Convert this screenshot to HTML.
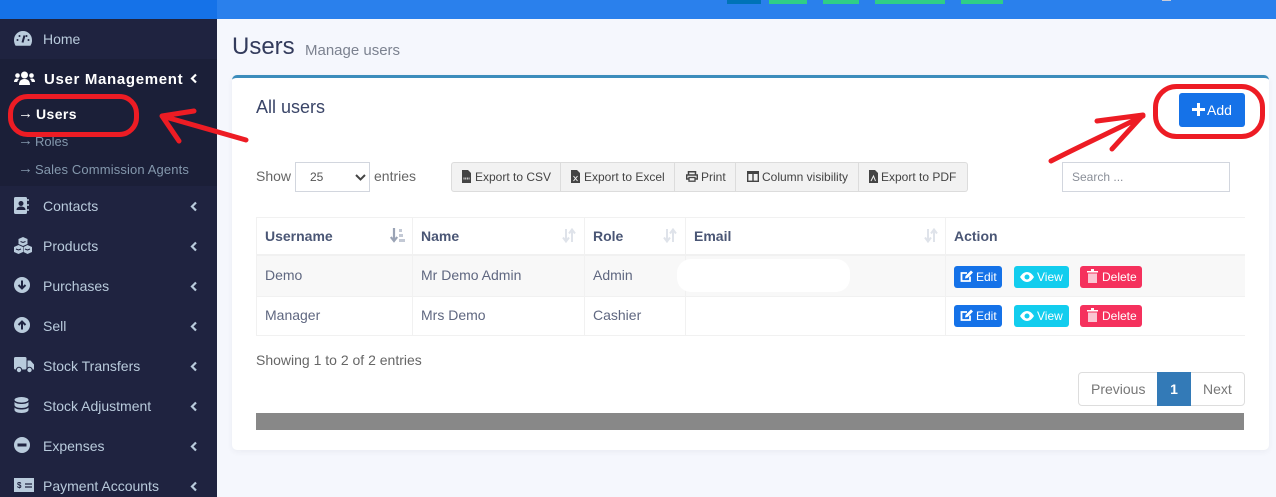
<!DOCTYPE html>
<html><head><meta charset="utf-8"><style>
html,body{margin:0;padding:0}
body{width:1276px;height:497px;overflow:hidden;position:relative;background:#f5f7fd;font-family:"Liberation Sans",sans-serif;font-size:14px;color:#555}
.a{position:absolute;white-space:nowrap}
.nav{left:43px;color:#b9cbdc;font-size:14px;line-height:20px}
.chev{left:190px}
.ic{position:absolute;left:14px}
.th{top:226px;font-weight:bold;color:#4a5675;font-size:14px;line-height:20px}
.td{color:#5f6780;font-size:14px;line-height:20px}
.b{position:absolute;height:22px;border-radius:3px;color:#fff;font-size:12px;line-height:22px;text-align:left;box-sizing:border-box;white-space:nowrap}
.tb{position:absolute;top:162px;height:30px;box-sizing:border-box;background:#f2f2f2;border:1px solid #dcdcdc;border-left-width:0;color:#444;font-size:12px;line-height:28px;white-space:nowrap}
.sort{position:absolute;top:228px}
.line{position:absolute;background:#f1f1f1}
</style></head><body>
<div class="a" style="left:0;top:0;width:217px;height:19px;background:#1572e8"></div>
<div class="a" style="left:217px;top:0;width:1059px;height:19px;background:#2a80ec"></div>
<div class="a" style="left:727px;top:0;width:34px;height:4px;background:#0073b7"></div>
<div class="a" style="left:769px;top:0;width:38px;height:4px;background:#2fce87"></div>
<div class="a" style="left:823px;top:0;width:36px;height:4px;background:#2fce87"></div>
<div class="a" style="left:875px;top:0;width:70px;height:4px;background:#2fce87"></div>
<div class="a" style="left:961px;top:0;width:42px;height:4px;background:#2fce87"></div>
<div class="a" style="left:1162px;top:0;width:9px;height:1px;background:#c8ccd8"></div>

<div class="a" style="left:0;top:19px;width:217px;height:478px;background:#1f2340"></div>
<div class="a" style="left:0;top:59px;width:217px;height:127px;background:#1b1f38"></div>

<svg class="ic" style="top:31px" width="18" height="15" viewBox="0 0 18 15"><path d="M9 0a9 9 0 0 0-9 9c0 2.200.6 4.200 1.600 5.800h14.800A9 9 0 0 0 18 9a9 9 0 0 0-9-9z" fill="#b9cbdc"/><path d="M8.500 11.500l2-7" stroke="#1f2340" stroke-width="2"/><circle cx="3.500" cy="9" r="1" fill="#1f2340"/><circle cx="14.500" cy="9" r="1" fill="#1f2340"/><circle cx="5.500" cy="5" r="1" fill="#1f2340"/><circle cx="12.500" cy="5" r="1" fill="#1f2340"/></svg>
<div class="a nav" style="top:29px">Home</div>

<svg class="ic" style="top:71px" width="21" height="15" viewBox="0 0 21 15" fill="#fff"><circle cx="10.500" cy="4" r="3.500"/><circle cx="3.500" cy="4.500" r="2.300"/><circle cx="17.500" cy="4.500" r="2.300"/><path d="M5 14c0-4 2-6 5.500-6s5.500 2 5.500 6zM0 11c0-2 1-3.500 3-3.500 1 0 2 .5 2 .5-1 1-1.600 2-1.800 3zM21 11c0-2-1-3.500-3-3.500-1 0-2 .5-2 .5 1 1 1.600 2 1.800 3z"/></svg>
<div class="a" style="left:44px;top:70px;color:#fff;font-size:15px;line-height:20px;font-weight:bold;letter-spacing:.67px">User Management</div>
<svg class="a chev" style="top:73px" width="8" height="11" viewBox="0 0 8 11"><path d="M6 1.500L2 5.500l4 4" fill="none" stroke="#fff" stroke-width="2.200"/></svg>

<div class="a" style="left:18px;top:105px;width:14px;height:18px;color:#fff;font-size:15px;line-height:18px">→</div>
<div class="a" style="left:36px;top:105px;color:#fff;font-size:14px;line-height:18px;font-weight:bold;letter-spacing:.4px">Users</div>
<div class="a" style="left:18px;top:132px;color:#8498ad;font-size:15px;line-height:18px">→</div>
<div class="a" style="left:35px;top:133px;color:#8498ad;font-size:13px;line-height:18px">Roles</div>
<div class="a" style="left:18px;top:160px;color:#8498ad;font-size:15px;line-height:18px">→</div>
<div class="a" style="left:35px;top:161px;color:#8498ad;font-size:13px;line-height:18px;letter-spacing:.13px">Sales Commission Agents</div>

<svg class="ic" style="top:197px" width="15" height="17" viewBox="0 0 15 17"><rect x="0" y="0" width="13" height="17" rx="1.500" fill="#b9cbdc"/><circle cx="7" cy="6.500" r="2.500" fill="#1f2340"/><path d="M2.500 13c0-2.500 2-3.500 4.500-3.500s4.500 1 4.500 3.500z" fill="#1f2340"/><path d="M13 3h2M13 8h2M13 13h2" stroke="#b9cbdc" stroke-width="1.500"/></svg>
<div class="a nav" style="top:196px">Contacts</div>

<svg class="ic" style="top:237px" width="18" height="17" viewBox="0 0 18 17" fill="#b9cbdc"><path d="M9 0l4.500 2v5L9 9 4.500 7V2z"/><path d="M4.500 8L9 10v5l-4.500 2L0 15v-5z"/><path d="M13.500 8l4.500 2v5l-4.500 2L9.500 15v-5z"/><path d="M6.500 4.500L9 5.500l2.500-1M2 12l2.500 1 2.500-1M11 12l2.500 1 2.500-1" fill="none" stroke="#1f2340"/></svg>
<div class="a nav" style="top:236px">Products</div>

<svg class="ic" style="top:277px" width="16" height="16" viewBox="0 0 16 16"><circle cx="8" cy="8" r="8" fill="#b9cbdc"/><path d="M8 3.500v8M4.500 8L8 11.500 11.500 8" fill="none" stroke="#1f2340" stroke-width="2"/></svg>
<div class="a nav" style="top:276px">Purchases</div>

<svg class="ic" style="top:317px" width="16" height="16" viewBox="0 0 16 16"><circle cx="8" cy="8" r="8" fill="#b9cbdc"/><path d="M8 12.500v-8M4.500 8L8 4.500 11.500 8" fill="none" stroke="#1f2340" stroke-width="2"/></svg>
<div class="a nav" style="top:316px">Sell</div>

<svg class="ic" style="top:357px" width="20" height="16" viewBox="0 0 20 16" fill="#b9cbdc"><rect x="0" y="0" width="12.500" height="12.500" rx="1.500"/><path d="M13.500 3.500h3l3.500 4v5h-6.500z"/><circle cx="5" cy="13" r="2.700" stroke="#1f2340"/><circle cx="15.500" cy="13" r="2.700" stroke="#1f2340"/></svg>
<div class="a nav" style="top:356px">Stock Transfers</div>

<svg class="ic" style="top:397px" width="15" height="16" viewBox="0 0 15 16" fill="#b9cbdc"><ellipse cx="7.500" cy="2.800" rx="7" ry="2.800"/><path d="M.5 5c1.500 1.500 4 2 7 2s5.500-.5 7-2v3c0 1.500-3 3-7 3s-7-1.500-7-3z"/><path d="M.5 10.500c1.500 1.500 4 2 7 2s5.500-.5 7-2V13c0 1.500-3 3-7 3s-7-1.500-7-3z"/></svg>
<div class="a nav" style="top:396px">Stock Adjustment</div>

<svg class="ic" style="top:437px" width="16" height="16" viewBox="0 0 16 16"><circle cx="8" cy="8" r="8" fill="#b9cbdc"/><rect x="3.500" y="6.500" width="9" height="3" fill="#1f2340"/></svg>
<div class="a nav" style="top:436px">Expenses</div>

<svg class="ic" style="top:478px" width="20" height="14" viewBox="0 0 20 14"><rect width="20" height="14" fill="#b9cbdc"/><path d="M11 6h7M11 9h7" stroke="#1f2340" stroke-width="1.300"/><text x="3" y="10" font-size="8" font-family="Liberation Sans" font-weight="bold" fill="#1f2340">$</text></svg>
<div class="a nav" style="top:476px">Payment Accounts</div>

<svg width="8" height="11" viewBox="0 0 8 11" class="a chev" style="top:201px"><path d="M6 1.500L2 5.500l4 4" fill="none" stroke="#b9cbdc" stroke-width="2.200"/></svg>
<svg width="8" height="11" viewBox="0 0 8 11" class="a chev" style="top:241px"><path d="M6 1.500L2 5.500l4 4" fill="none" stroke="#b9cbdc" stroke-width="2.200"/></svg>
<svg width="8" height="11" viewBox="0 0 8 11" class="a chev" style="top:281px"><path d="M6 1.500L2 5.500l4 4" fill="none" stroke="#b9cbdc" stroke-width="2.200"/></svg>
<svg width="8" height="11" viewBox="0 0 8 11" class="a chev" style="top:321px"><path d="M6 1.500L2 5.500l4 4" fill="none" stroke="#b9cbdc" stroke-width="2.200"/></svg>
<svg width="8" height="11" viewBox="0 0 8 11" class="a chev" style="top:361px"><path d="M6 1.500L2 5.500l4 4" fill="none" stroke="#b9cbdc" stroke-width="2.200"/></svg>
<svg width="8" height="11" viewBox="0 0 8 11" class="a chev" style="top:401px"><path d="M6 1.500L2 5.500l4 4" fill="none" stroke="#b9cbdc" stroke-width="2.200"/></svg>
<svg width="8" height="11" viewBox="0 0 8 11" class="a chev" style="top:441px"><path d="M6 1.500L2 5.500l4 4" fill="none" stroke="#b9cbdc" stroke-width="2.200"/></svg>
<svg width="8" height="11" viewBox="0 0 8 11" class="a chev" style="top:481px"><path d="M6 1.500L2 5.500l4 4" fill="none" stroke="#b9cbdc" stroke-width="2.200"/></svg>

<div class="a" style="left:232px;top:32px;font-size:24px;line-height:30px;color:#333b5c">Users</div>
<div class="a" style="left:305px;top:42px;font-size:15px;line-height:18px;color:#7c8290">Manage users</div>

<div class="a" style="left:232px;top:75px;width:1037px;height:375px;background:#fff;border-radius:5px;border-top:3px solid #3c8dbc;box-sizing:border-box;box-shadow:0 2px 6px rgba(69,65,78,.06)"></div>
<div class="a" style="left:256px;top:96px;font-size:18px;line-height:22px;color:#3a4568">All users</div>

<div class="a" style="left:1179px;top:93px;width:66px;height:34px;background:#1572e8;border-radius:3px"></div>
<svg class="a" style="left:1192px;top:103px" width="13" height="13" viewBox="0 0 13 13"><path d="M6.500 0v13M0 6.500h13" stroke="#fff" stroke-width="3"/></svg>
<div class="a" style="left:1207px;top:100px;color:#fff;font-size:14px;line-height:20px">Add</div>

<div class="a td" style="left:256px;top:166px;color:#666">Show</div>
<div class="a" style="left:295px;top:162px;width:75px;height:30px;box-sizing:border-box;border:1px solid #d2d6de;background:#fff;font-size:12px;line-height:28px;padding-left:14px;color:#555">25</div>
<svg class="a" style="left:355px;top:174px" width="11" height="7" viewBox="0 0 11 7"><path d="M1 1l4.500 4.500L10 1" fill="none" stroke="#444" stroke-width="2"/></svg>
<div class="a td" style="left:374px;top:166px;color:#666">entries</div>

<div class="tb" style="left:451px;width:110px;border-left-width:1px;border-radius:3px 0 0 3px;padding-left:23px">Export to CSV</div>
<div class="tb" style="left:561px;width:114px;padding-left:23px">Export to Excel</div>
<div class="tb" style="left:675px;width:61px;padding-left:26px">Print</div>
<div class="tb" style="left:736px;width:123px;padding-left:26px">Column visibility</div>
<div class="tb" style="left:859px;width:109px;border-radius:0 3px 3px 0;padding-left:22px">Export to PDF</div>
<svg class="a" style="left:462px;top:170px" width="9" height="13" viewBox="0 0 9 13"><path d="M0 0h6l3 3v10H0z" fill="#444"/><path d="M1.500 8.500h6" stroke="#ddd" stroke-width="2" stroke-dasharray="1 .7"/></svg>
<svg class="a" style="left:571px;top:170px" width="9" height="13" viewBox="0 0 9 13"><path d="M0 0h6l3 3v10H0z" fill="#444"/><path d="M2.500 6l4 5M6.500 6l-4 5" stroke="#f2f2f2"/></svg>
<svg class="a" style="left:686px;top:171px" width="12" height="11" viewBox="0 0 12 11"><path d="M2.500 4V.8h7V4M2.500 8H.7V4h10.600v4H9.500" fill="none" stroke="#444" stroke-width="1.500"/><rect x="3" y="6.500" width="6" height="3.700" fill="none" stroke="#444" stroke-width="1.300"/></svg>
<svg class="a" style="left:747px;top:171px" width="12" height="11" viewBox="0 0 12 11"><rect x=".7" y=".7" width="10.600" height="9.600" fill="none" stroke="#444" stroke-width="1.400"/><rect x="0" y="0" width="12" height="3" fill="#444"/><path d="M6 1v9" stroke="#444" stroke-width="1.400"/></svg>
<svg class="a" style="left:869px;top:170px" width="9" height="13" viewBox="0 0 9 13"><path d="M0 0h6l3 3v10H0z" fill="#444"/><path d="M2 11l2.500-5 2 5" fill="none" stroke="#f2f2f2"/></svg>

<div class="a" style="left:1062px;top:162px;width:168px;height:30px;box-sizing:border-box;border:1px solid #d2d6de;background:#fff;font-size:12px;line-height:28px;padding-left:9px;color:#8a8f98">Search ...</div>

<div class="a" style="left:256px;top:254px;width:989px;height:43px;background:#f8f8f8"></div>
<div class="line" style="left:256px;top:217px;width:989px;height:1px"></div>
<div class="line" style="left:256px;top:254px;width:989px;height:2px"></div>
<div class="line" style="left:256px;top:296px;width:989px;height:1px"></div>
<div class="line" style="left:256px;top:335px;width:989px;height:1px"></div>
<div class="line" style="left:256px;top:217px;width:1px;height:119px"></div>
<div class="line" style="left:412px;top:217px;width:1px;height:119px"></div>
<div class="line" style="left:584px;top:217px;width:1px;height:119px"></div>
<div class="line" style="left:685px;top:217px;width:1px;height:119px"></div>
<div class="line" style="left:945px;top:217px;width:1px;height:119px"></div>

<div class="a th" style="left:265px">Username</div>
<div class="a th" style="left:421px">Name</div>
<div class="a th" style="left:593px">Role</div>
<div class="a th" style="left:694px">Email</div>
<div class="a th" style="left:954px">Action</div>

<svg class="sort" style="left:390px" width="15" height="15" viewBox="0 0 15 15"><path d="M4 0v12M.8 9L4 13l3.200-4" fill="none" stroke="#9aa3b5" stroke-width="2.200"/><path d="M9 1h3v3H9zM9 6h4v3H9zM9 11h6v3H9z" fill="#c3c9d5"/></svg>
<svg class="sort" style="left:562px" width="14" height="15" viewBox="0 0 14 15"><path d="M4 1v12M1 9.500L4 13.500l3-4M10 14V2M7 5.500L10 1.500l3 4" fill="none" stroke="#dfe3ea" stroke-width="2"/></svg>
<svg class="sort" style="left:663px" width="14" height="15" viewBox="0 0 14 15"><path d="M4 1v12M1 9.500L4 13.500l3-4M10 14V2M7 5.500L10 1.500l3 4" fill="none" stroke="#dfe3ea" stroke-width="2"/></svg>
<svg class="sort" style="left:924px" width="14" height="15" viewBox="0 0 14 15"><path d="M4 1v12M1 9.500L4 13.500l3-4M10 14V2M7 5.500L10 1.500l3 4" fill="none" stroke="#dfe3ea" stroke-width="2"/></svg>

<div class="a td" style="left:265px;top:265px">Demo</div>
<div class="a td" style="left:421px;top:265px">Mr Demo Admin</div>
<div class="a td" style="left:593px;top:265px">Admin</div>
<div class="a td" style="left:265px;top:305px">Manager</div>
<div class="a td" style="left:421px;top:305px">Mrs Demo</div>
<div class="a td" style="left:593px;top:305px">Cashier</div>

<div class="a" style="left:677px;top:259px;width:173px;height:33px;background:#fff;border-radius:14px"></div>

<div class="b" style="left:954px;top:266px;width:48px;background:#1572e8;padding-left:22px">Edit</div>
<div class="b" style="left:1014px;top:266px;width:55px;background:#12cdee;padding-left:23px">View</div>
<div class="b" style="left:1080px;top:266px;width:62px;background:#f5315d;padding-left:22px">Delete</div>
<div class="b" style="left:954px;top:305px;width:48px;background:#1572e8;padding-left:22px">Edit</div>
<div class="b" style="left:1014px;top:305px;width:55px;background:#12cdee;padding-left:23px">View</div>
<div class="b" style="left:1080px;top:305px;width:62px;background:#f5315d;padding-left:22px">Delete</div>

<svg class="a" style="left:960px;top:270px" width="14" height="13" viewBox="0 0 14 13"><path d="M10 6.500V11H1.500V3H7" fill="none" stroke="#fff" stroke-width="1.800"/><path d="M5 8.500l.5-2.500L11 .5l2 2L7.500 8z" fill="#fff"/></svg>
<svg class="a" style="left:960px;top:309px" width="14" height="13" viewBox="0 0 14 13"><path d="M10 6.500V11H1.500V3H7" fill="none" stroke="#fff" stroke-width="1.800"/><path d="M5 8.500l.5-2.500L11 .5l2 2L7.500 8z" fill="#fff"/></svg>
<svg class="a" style="left:1020px;top:272px" width="14" height="10" viewBox="0 0 14 10"><path d="M0 5c2-3.300 4.300-5 7-5s5 1.700 7 5c-2 3.300-4.300 5-7 5S2 8.300 0 5z" fill="#fff"/><circle cx="7" cy="5" r="2.500" fill="#12cdee"/></svg>
<svg class="a" style="left:1020px;top:311px" width="14" height="10" viewBox="0 0 14 10"><path d="M0 5c2-3.300 4.300-5 7-5s5 1.700 7 5c-2 3.300-4.300 5-7 5S2 8.300 0 5z" fill="#fff"/><circle cx="7" cy="5" r="2.500" fill="#12cdee"/></svg>
<svg class="a" style="left:1087px;top:269px" width="11" height="14" viewBox="0 0 11 14"><path d="M0 2h11v1.500H0zM4 0h3v2H4z" fill="#fff"/><path d="M1 4.500h9V14H1z" fill="#fbc5d2"/></svg>
<svg class="a" style="left:1087px;top:308px" width="11" height="14" viewBox="0 0 11 14"><path d="M0 2h11v1.500H0zM4 0h3v2H4z" fill="#fff"/><path d="M1 4.500h9V14H1z" fill="#fbc5d2"/></svg>

<div class="a" style="left:256px;top:350px;font-size:14px;line-height:20px;color:#666">Showing 1 to 2 of 2 entries</div>

<div class="a" style="left:1078px;top:372px;width:167px;height:34px;box-sizing:border-box;border:1px solid #ddd;border-radius:4px;background:#fff"></div>
<div class="a" style="left:1157px;top:372px;width:34px;height:34px;background:#337ab7;color:#fff;font-weight:bold;font-size:14px;line-height:34px;text-align:center">1</div>
<div class="a" style="left:1091px;top:379px;font-size:14px;line-height:20px;color:#777">Previous</div>
<div class="a" style="left:1203px;top:379px;font-size:14px;line-height:20px;color:#777">Next</div>

<div class="a" style="left:256px;top:413px;width:988px;height:17px;background:#888"></div>

<svg class="a" style="left:0;top:0" width="1276" height="497" viewBox="0 0 1276 497" fill="none" stroke="#ed1c24" stroke-linecap="round" stroke-linejoin="round">
<rect x="10.500" y="96.500" width="126" height="38" rx="17" stroke-width="5"/>
<path d="M246 140L162 116M194 111L162 116L179 141" stroke-width="5"/>
<rect x="1155.500" y="86.500" width="107" height="50" rx="21" stroke-width="5"/>
<path d="M1051 161C1080 146 1115 130 1143 116M1097 121L1143 115L1112 149" stroke-width="5"/>
</svg>
</body></html>
